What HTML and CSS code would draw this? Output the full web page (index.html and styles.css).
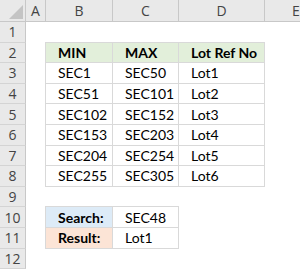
FILE: index.html
```html
<!DOCTYPE html>
<html>
<head>
<meta charset="utf-8">
<link rel="stylesheet" href="styles.css">
</head>
<body>
<div class="frame">
<div class="sheet">
  <div class="corner"><svg class="tri" width="14" height="14" viewBox="0 0 14 14"><polygon points="14,0 14,14 0,14" fill="#c4c4c4"/></svg></div>
  <div class="colh">A</div>
  <div class="colh">B</div>
  <div class="colh">C</div>
  <div class="colh">D</div>
  <div class="colh last">E</div>

  <div class="rowh r1">1</div>
  <div class="rowh r2">2</div>
  <div class="rowh r3">3</div>
  <div class="rowh r4">4</div>
  <div class="rowh r5">5</div>
  <div class="rowh r6">6</div>
  <div class="rowh r7">7</div>
  <div class="rowh r8">8</div>
  <div class="rowh r9">9</div>
  <div class="rowh r10">10</div>
  <div class="rowh r11">11</div>
  <div class="rowh r12">12</div>

  <div class="table">
    <div class="cell head">MIN</div><div class="cell head">MAX</div><div class="cell head">Lot Ref No</div>
    <div class="cell">SEC1</div><div class="cell">SEC50</div><div class="cell">Lot1</div>
    <div class="cell">SEC51</div><div class="cell">SEC101</div><div class="cell">Lot2</div>
    <div class="cell">SEC102</div><div class="cell">SEC152</div><div class="cell">Lot3</div>
    <div class="cell">SEC153</div><div class="cell">SEC203</div><div class="cell">Lot4</div>
    <div class="cell">SEC204</div><div class="cell">SEC254</div><div class="cell">Lot5</div>
    <div class="cell">SEC255</div><div class="cell">SEC305</div><div class="cell">Lot6</div>
  </div>

  <div class="lookup">
    <div class="cell label search">Search:</div><div class="cell">SEC48</div>
    <div class="cell label result">Result:</div><div class="cell">Lot1</div>
  </div>
</div>
</div>
</body>
</html>
```
FILE: styles.css
```css
html, body {
  margin: 0;
  padding: 0;
  background: #ffffff;
  overflow: hidden;
}
.frame {
  width: 300px;
  height: 269px;
  overflow: hidden;
}
.sheet {
  display: grid;
  grid-template-columns: 26px 20px 67px 66px 86px 35px;
  grid-template-rows: 22px repeat(12, 20.6px);
  width: 300px;
  font-family: Lato, "Liberation Sans", sans-serif;
  color: #000;
}
.corner {
  grid-row: 1;
  grid-column: 1;
  background: #e9e9e9;
  border-right: 1px solid #c8c8c8;
  border-bottom: 1px solid #c8c8c8;
  box-sizing: border-box;
  position: relative;
}
.tri {
  position: absolute;
  right: 2px;
  bottom: 2px;
}
.colh {
  grid-row: 1;
  background: #e9e9e9;
  border-right: 1px solid #c8c8c8;
  border-bottom: 1px solid #c8c8c8;
  box-sizing: border-box;
  display: flex;
  align-items: center;
  justify-content: center;
  font-family: "Open Sans", sans-serif;
  font-size: 14px;
  color: #444;
}
.colh.last {
  justify-content: flex-start;
  padding-left: 27px;
  border-right: none;
  overflow: hidden;
}
.rowh {
  grid-column: 1;
  background: #e9e9e9;
  border-right: 1px solid #c8c8c8;
  border-bottom: 1px solid #d4d4d4;
  box-sizing: border-box;
  display: flex;
  align-items: center;
  justify-content: center;
  font-family: "Open Sans", sans-serif;
  font-size: 14px;
  color: #444;
}
.r1 { grid-row: 2; }
.r2 { grid-row: 3; }
.r3 { grid-row: 4; }
.r4 { grid-row: 5; }
.r5 { grid-row: 6; }
.r6 { grid-row: 7; }
.r7 { grid-row: 8; }
.r8 { grid-row: 9; }
.r9 { grid-row: 10; }
.r10 { grid-row: 11; }
.r11 { grid-row: 12; }
.r12 { grid-row: 13; }

.table {
  grid-column: 3 / 6;
  grid-row: 3 / 10;
  display: grid;
  grid-template-columns: 67px 66px 86px;
  grid-auto-rows: 1fr;
  border-top: 1px solid #d9d9d9;
  border-left: 1px solid #d9d9d9;
  margin-left: -1px;
  margin-top: -1px;
}
.lookup {
  grid-column: 3 / 5;
  grid-row: 11 / 13;
  display: grid;
  grid-template-columns: 67px 66px;
  grid-auto-rows: 1fr;
  border-top: 1px solid #d9d9d9;
  border-left: 1px solid #d9d9d9;
  margin-left: -1px;
  margin-top: -1px;
}
.cell {
  border-right: 1px solid #d9d9d9;
  border-bottom: 1px solid #d9d9d9;
  display: flex;
  align-items: center;
  padding-left: 12px;
  font-size: 14px;
  white-space: nowrap;
  overflow: hidden;
}
.head {
  background: #e2efda;
  font-weight: bold;
}
.label {
  font-weight: bold;
}
.search { background: #ddebf7; }
.result { background: #fce4d6; }
```
